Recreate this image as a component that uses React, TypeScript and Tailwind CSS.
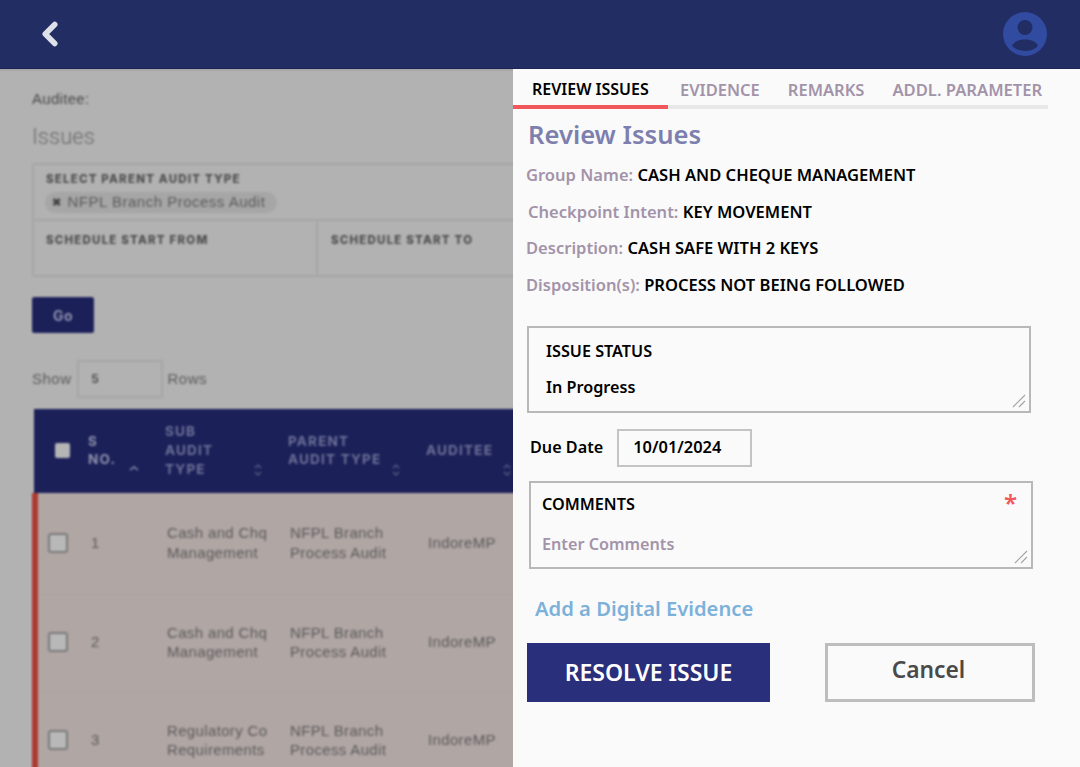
import { ChevronLeft } from "lucide-react";

const rows = [
  { no: 1, sub: ["Cash and Chq", "Management"], h: "h-[102px]" },
  { no: 2, sub: ["Cash and Chq", "Management"], h: "h-[97px]" },
  { no: 3, sub: ["Regulatory Co", "Requirements"], h: "h-[99px]" },
];

const details = [
  { label: "Group Name:", value: "CASH AND CHEQUE MANAGEMENT", cls: "ml-[13px]" },
  { label: "Checkpoint Intent:", value: "KEY MOVEMENT", cls: "ml-[15px]" },
  { label: "Description:", value: "CASH SAFE WITH 2 KEYS", cls: "ml-[13px]" },
  { label: "Disposition(s):", value: "PROCESS NOT BEING FOLLOWED", cls: "ml-[13px]" },
];

const SortIcon = () => (
  <svg width="8" height="14" viewBox="0 0 8 14" fill="none" stroke="#5f6488" strokeWidth="1.2">
    <path d="M1 5l3-3 3 3M1 9l3 3 3-3" />
  </svg>
);

const ResizeHandle = () => (
  <svg className="absolute right-[3px] bottom-[3px]" width="14" height="14" viewBox="0 0 14 14" stroke="#a3a3a3" strokeWidth="1.1">
    <path d="M1 13L13 1M7 13l6-6" />
  </svg>
);

const BackgroundPage = () => (
  <div className="w-[513px] shrink-0 overflow-hidden bg-[#b2b2b2] font-['Liberation_Sans',sans-serif]">
    <div className="mb-[18px] h-[2px] bg-[#a8a8a8]" />
    <div className="w-[560px] blur-[0.9px]">
      <p className="ml-[32px] text-[15px] leading-[20px] tracking-[0.3px] text-[#4a4a4a]">Auditee:</p>
      <h2 className="ml-[32px] mt-[13px] font-['Roboto',sans-serif] text-[22px] leading-[30px] font-light text-[#6c6c6c]">Issues</h2>
      <div className="ml-[32px] mt-[11px] h-[114px] rounded-[2px] border-2 border-[#a6a6a6]">
        <div className="h-[56px] border-b-2 border-[#a6a6a6] pl-[12px] pt-[7px]">
          <p className="font-['Inter',sans-serif] text-[11.5px] leading-[14px] font-extrabold tracking-[1.2px] text-[#4f4f4f]">
            SELECT PARENT AUDIT TYPE
          </p>
          <span className="-ml-[1px] mt-[6px] flex h-[21px] w-[232px] items-center rounded-full bg-[#a6a6a6] pl-[7px] text-[15px] tracking-[0.5px] text-[#5a5a5a]">
            <span className="mr-[6px] text-[11px] font-bold text-[#444]">✖</span>NFPL Branch Process Audit
          </span>
        </div>
        <div className="flex h-[54px]">
          <div className="w-[284px] border-r-2 border-[#a6a6a6] pl-[12px] pt-[12px]">
            <p className="font-['Inter',sans-serif] text-[11.5px] leading-[14px] font-extrabold tracking-[1.2px] text-[#4f4f4f]">
              SCHEDULE START FROM
            </p>
          </div>
          <div className="pl-[13px] pt-[12px]">
            <p className="font-['Inter',sans-serif] text-[11.5px] leading-[14px] font-extrabold tracking-[1.2px] text-[#4f4f4f]">
              SCHEDULE START TO
            </p>
          </div>
        </div>
      </div>
      <button className="ml-[32px] mt-[20px] block h-[36px] w-[62px] rounded-[2px] border border-[#23265f] bg-[#1b2059] font-['Inter',sans-serif] text-[14px] font-bold tracking-[0.5px] text-[#8d90ad]">
        Go
      </button>
      <div className="ml-[32px] mt-[27px] flex h-[38px] items-center text-[15px] tracking-[0.5px] text-[#5a5a5a]">
        <span>Show</span>
        <span className="ml-[5px] flex h-[38px] w-[86px] items-center rounded-[2px] border-2 border-[#a6a6a6] pl-[13px] text-[13px] font-bold text-[#555]">
          5
        </span>
        <span className="ml-[5px]">Rows</span>
      </div>
      <div className="ml-[34px] mt-[11px] flex h-[84px] bg-[#1b2059] pb-[2px] font-['Inter',sans-serif] text-[13.5px] leading-[19px] font-bold tracking-[1.2px] text-[#6d7096]">
        <div className="flex w-[54px] items-center pl-[21px]">
          <span className="size-[15px] rounded-[2px] bg-[#b5b5b5]" />
        </div>
        <div className="flex w-[77px] items-center">
          <span className="leading-[18px] text-[#8f92ac]">S<br />NO.</span>
          <svg className="ml-[13px] mt-[36px]" width="10" height="6" viewBox="0 0 10 6" fill="none" stroke="#8f92ac" strokeWidth="1.5">
            <path d="M1 5l4-3 4 3" />
          </svg>
        </div>
        <div className="flex w-[123px] items-center">
          <span>SUB<br />AUDIT<br />TYPE</span>
          <span className="ml-[41px] mt-[40px]"><SortIcon /></span>
        </div>
        <div className="flex w-[138px] items-center">
          <span className="leading-[18px]">PARENT<br />AUDIT TYPE</span>
          <span className="ml-[11px] mt-[40px]"><SortIcon /></span>
        </div>
        <div className="flex items-center">
          <span>AUDITEE</span>
          <span className="ml-[10px] mt-[40px]"><SortIcon /></span>
        </div>
      </div>
      <div className="ml-[32px] border-l-[6px] border-[#ad3a30] bg-[#b0a6a4] text-[15px] leading-[19.5px] tracking-[0.35px] text-[#5a5a5a]">
        {rows.map((row) => (
          <div key={row.no} className={`flex items-center border-b border-[#aca2a0] pb-[2px] ${row.h}`}>
            <div className="w-[50px] pl-[10px]">
              <span className="block size-[20px] rounded-[3px] border-2 border-[#7a7a7a] bg-[#b8b8b8]" />
            </div>
            <div className="w-[79px] pl-[3px] font-medium">{row.no}</div>
            <div className="w-[123px]">
              {row.sub[0]}<br />{row.sub[1]}
            </div>
            <div className="w-[138px]">NFPL Branch<br />Process Audit</div>
            <div>IndoreMP</div>
          </div>
        ))}
      </div>
    </div>
  </div>
);

const ReviewPanel = () => (
  <div className="flex-1 bg-[#fafafa] font-['Noto_Sans',sans-serif] font-semibold">
    <div className="mr-[32px] flex h-[40px] border-b-4 border-[#e8e8e8] text-[16.5px] leading-[41px]">
      <div className="-mb-[4px] w-[155px] border-b-4 border-[#f0585b] pl-[19px] text-[16px] text-black">REVIEW ISSUES</div>
      <div className="ml-[12px] text-[#a393a9]">EVIDENCE</div>
      <div className="ml-[28px] text-[#a393a9]">REMARKS</div>
      <div className="ml-[28px] text-[16.6px] text-[#a393a9]">ADDL. PARAMETER</div>
    </div>
    <h1 className="ml-[15px] mt-[8px] text-[25.6px] leading-[36px] text-[#7d80ae]">Review Issues</h1>
    <div className="mt-[11px] flex flex-col gap-[14.6px] text-[16.55px] leading-[22px]">
      {details.map((item) => (
        <p key={item.label} className={item.cls}>
          <span className="text-[#a393a9]">{item.label}</span> <span className="text-black">{item.value}</span>
        </p>
      ))}
    </div>
    <div className="relative ml-[14px] mt-[30px] h-[87px] w-[504px] border-2 border-[#b8b8b8] pl-[17px] pt-[12px] text-[16.2px] leading-[22px] text-black">
      <p>ISSUE STATUS</p>
      <p className="mt-[14px]">In Progress</p>
      <ResizeHandle />
    </div>
    <div className="ml-[17px] mt-[16px] flex items-center text-[16.2px] text-black">
      <span className="-mt-[2px]">Due Date</span>
      <span className="ml-[14px] flex h-[38px] w-[135px] items-center border-2 border-[#c4c4c4] pl-[14px] text-[16.4px]">10/01/2024</span>
    </div>
    <div className="relative ml-[16px] mt-[14px] h-[88px] w-[504px] border-2 border-[#b8b8b8] pl-[11px] pt-[10px] text-[16.2px] leading-[22px]">
      <p className="text-black">COMMENTS</p>
      <p className="mt-[18px] text-[#a393a9]">Enter Comments</p>
      <span className="absolute right-[14px] top-[6px] text-[24px] leading-[28px] text-[#f0585b]">*</span>
      <ResizeHandle />
    </div>
    <p className="ml-[22px] mt-[25px] text-[20.2px] leading-[28px] text-[#7cb1da]">Add a Digital Evidence</p>
    <div className="mt-[21px] flex items-start">
      <button className="ml-[14px] h-[59px] w-[243px] bg-[#2a2f7c] text-[23px] text-white">RESOLVE ISSUE</button>
      <button className="ml-[55px] h-[59px] w-[210px] border-[3px] border-[#bdbdbd] pb-[4px] pr-[3px] text-[22.8px] text-[#4a4a4a]">Cancel</button>
    </div>
  </div>
);

export default function App() {
  return (
    <div className="flex h-[767px] w-[1080px] flex-col overflow-hidden">
      <header className="flex h-[69px] shrink-0 items-center justify-between border-b border-[#1a2458] bg-[#212d63] pl-[31px] pr-[33px]">
        <ChevronLeft className="size-[38px] text-[#dfe1ea]" strokeWidth={3.5} />
        <svg width="44" height="44" viewBox="0 0 44 44">
          <circle cx="22" cy="22" r="22" fill="#304b9f" />
          <circle cx="22" cy="15.5" r="7.5" fill="#212d63" />
          <path d="M9 34c2-5 8-6.5 13-6.5s11 1.5 13 6.5c-3 3-8 5-13 5s-10-2-13-5z" fill="#212d63" />
        </svg>
      </header>
      <div className="flex min-h-0 flex-1">
        <BackgroundPage />
        <ReviewPanel />
      </div>
    </div>
  );
}
